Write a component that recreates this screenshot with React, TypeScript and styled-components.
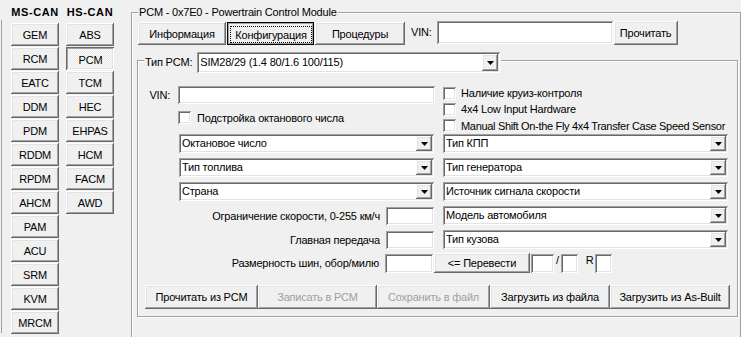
import React from 'react';
import styled, { createGlobalStyle, css } from 'styled-components';

const Global = createGlobalStyle`
  html, body { margin: 0; padding: 0; background: #f0f0f0; }
  body {
    width: 741px; height: 337px; overflow: hidden;
    font-family: "Liberation Sans", Arial, sans-serif;
    font-size: 11px; letter-spacing: -0.2px; color: #000;
  }
  * { box-sizing: border-box; }
`;

const raised = css`
  background: #f0f0f0;
  box-shadow: inset -1px -1px #696969, inset 1px 1px #fff, inset -2px -2px #a0a0a0, inset 2px 2px #e3e3e3;
`;
const sunken = css`
  background: #fff;
  box-shadow: inset 1px 1px #a0a0a0, inset -1px -1px #fff, inset 2px 2px #696969, inset -2px -2px #e3e3e3;
`;

const Page = styled.div`
  display: flex;
  height: 337px;
  overflow: hidden;
`;

/* ---------- side ---------- */
const Side = styled.div`
  width: 131px;
  flex-shrink: 0;
  display: flex;
  align-items: flex-start;
`;
const EdgeLine = styled.div`
  width: 1px;
  height: 313px;
  margin: 20px 9px 0 1px;
  background: #a0a0a0;
`;
const Column = styled.div<{ $gapLeft?: number }>`
  width: 48px;
  display: flex;
  flex-direction: column;
  gap: 1px;
  margin-left: ${p => p.$gapLeft ?? 0}px;
`;
const ColumnHeader = styled.div`
  height: 22px;
  line-height: 24px;
  text-align: center;
  font-weight: bold;
  letter-spacing: 0.6px;
  white-space: nowrap;
`;
const SideButton = styled.button<{ $active?: boolean }>`
  width: 48px;
  height: 23px;
  border: 0;
  padding: 0;
  font: inherit;
  letter-spacing: inherit;
  color: #000;
  ${raised}
  ${p => p.$active && css`
    background: repeating-conic-gradient(#fff 0 25%, #e6e6e6 0 50%) 0 0 / 2px 2px;
    box-shadow: inset 1px 1px #696969, inset -1px -1px #fff, inset 2px 2px #a0a0a0, inset -2px -2px #e3e3e3;
    padding: 2px 0 0 1px;
  `}
`;

/* ---------- group boxes ---------- */
const Group = styled.fieldset`
  margin: 0;
  padding: 0;
  min-width: 0;
  border: 1px solid #a0a0a0;
  box-shadow: inset 1px 1px #fff, 1px 1px #fff;
`;
const OuterGroup = styled(Group)`
  width: 610px;
  height: 400px;
  margin-top: 6px;
  padding: 2px 0 0 6px;
`;
const OuterLegend = styled.legend`
  padding: 0 1px;
  line-height: 13px;
  height: 13px;
  background: #f0f0f0;
  white-space: nowrap;
`;
const InnerGroup = styled(Group)`
  width: 601px;
  margin: 7px 0 0 -1px;
`;
const InnerLegend = styled.legend`
  padding: 0 1px;
  margin-left: 6px;
  height: 16px;
  background: #f0f0f0;
`;
const LegendContent = styled.span`
  display: flex;
  align-items: flex-start;
  gap: 5px;
  line-height: 21px;
`;

/* ---------- controls ---------- */
const Button = styled.button<{ $w: number; $h?: number; $disabled?: boolean }>`
  width: ${p => p.$w}px;
  height: ${p => p.$h ?? 24}px;
  flex-shrink: 0;
  border: 0;
  padding: 0;
  font: inherit;
  letter-spacing: inherit;
  color: ${p => (p.$disabled ? '#a0a0a0' : '#000')};
  white-space: nowrap;
  ${raised}
`;
const TabButton = styled.button<{ $w: number; $active?: boolean }>`
  width: ${p => p.$w}px;
  height: 23px;
  margin-top: 1px;
  flex-shrink: 0;
  border: 0;
  padding: 0;
  font: inherit;
  letter-spacing: inherit;
  color: #000;
  display: flex;
  align-items: stretch;
  justify-content: stretch;
  ${raised}
  ${p => p.$active && css`
    border: 1px solid #000;
    box-shadow: inset 1px 1px #a0a0a0, inset -1px -1px #a0a0a0;
    padding: 3px 1px 1px 2px;
  `}
`;
const TabLabel = styled.span<{ $focus?: boolean }>`
  flex: 1;
  display: flex;
  align-items: center;
  justify-content: center;
  border: 1px dotted ${p => (p.$focus ? '#000' : 'transparent')};
`;
const TextInput = styled.div<{ $w: number; $h?: number; $ml?: number }>`
  width: ${p => p.$w}px;
  height: ${p => p.$h ?? 18}px;
  margin-left: ${p => p.$ml ?? 0}px;
  flex-shrink: 0;
  ${sunken}
`;
const Combo = styled.div<{ $w: number; $h?: number; $ml?: number }>`
  width: ${p => p.$w}px;
  height: ${p => p.$h ?? 19}px;
  margin-left: ${p => p.$ml ?? 0}px;
  flex-shrink: 0;
  display: flex;
  padding: 2px;
  ${sunken}
`;
const ComboText = styled.span<{ $lh?: number }>`
  flex: 1;
  padding-left: 1px;
  line-height: ${p => p.$lh ?? 15}px;
  white-space: nowrap;
  overflow: hidden;
`;
const ComboArrow = styled.span`
  width: 16px;
  display: flex;
  align-items: center;
  justify-content: center;
  ${raised}
`;
const CheckRow = styled.div<{ $h?: number; $tight?: boolean }>`
  display: flex;
  align-items: center;
  gap: 5px;
  height: ${p => p.$h ?? 13}px;
  white-space: nowrap;
  letter-spacing: ${p => (p.$tight ? '-0.32px' : 'inherit')};
`;
const CheckBox = styled.span`
  width: 13px;
  height: 13px;
  flex-shrink: 0;
  ${sunken}
`;

/* ---------- layout pieces ---------- */
const TopRow = styled.div`
  display: flex;
  align-items: flex-start;
  height: 24px;
  gap: 1px;
`;
const TopVinLabel = styled.span`
  line-height: 23px;
  margin: 0 4px 0 5px;
`;
const InnerBody = styled.div`
  padding: 18px 0 7px 0;
`;
const TopSection = styled.div`
  display: flex;
  height: 48px;
`;
const LeftTop = styled.div`
  width: 297px;
  display: flex;
  flex-direction: column;
`;
const VinRow = styled.div`
  display: flex;
  align-items: center;
  height: 18px;
`;
const SideLabel = styled.span`
  width: 40px;
  padding-right: 8px;
  text-align: right;
  flex-shrink: 0;
`;
const LeftCheck = styled(CheckRow)`
  margin: 7px 0 0 40px;
  gap: 6px;
`;
const RightTop = styled.div`
  width: 290px;
  margin: -1px 0 0 8px;
  display: flex;
  flex-direction: column;
`;
const SelectGrid = styled.div`
  display: grid;
  grid-template-columns: 257px 285px;
  grid-template-rows: repeat(5, 19px);
  grid-auto-flow: column;
  column-gap: 8px;
  row-gap: 5px;
  margin-left: 40px;
`;
const FieldRow = styled.div<{ $w?: number }>`
  display: flex;
  align-items: center;
  justify-content: flex-end;
  gap: 6px;
  width: ${p => (p.$w ? `${p.$w}px` : 'auto')};
  flex-shrink: 0;
  white-space: nowrap;
  padding-right: 1px;
`;
const ConvertRow = styled.div`
  display: flex;
  align-items: center;
  height: 20px;
  margin: 4px 0 0 40px;
`;
const Slash = styled.span<{ $ml: number; $mr: number }>`
  margin: 0 ${p => p.$mr}px 0 ${p => p.$ml}px;
  align-self: flex-start;
  line-height: 15px;
`;
const ButtonRow = styled.div`
  display: flex;
  margin: 12px 0 0 7px;
`;

const Arrow = () => (
  <svg width="7" height="4" viewBox="0 0 7 4">
    <path d="M0 0h7L3.5 4z" fill="#000" />
  </svg>
);

const Select = ({ text, w, h, ml, lh }: { text: string; w: number; h?: number; ml?: number; lh?: number }) => (
  <Combo $w={w} $h={h} $ml={ml} role="combobox">
    <ComboText $lh={lh}>{text}</ComboText>
    <ComboArrow>
      <Arrow />
    </ComboArrow>
  </Combo>
);

const ms = ['GEM', 'RCM', 'EATC', 'DDM', 'PDM', 'RDDM', 'RPDM', 'AHCM', 'PAM', 'ACU', 'SRM', 'KVM', 'MRCM'];
const hs = ['ABS', 'PCM', 'TCM', 'HEC', 'EHPAS', 'HCM', 'FACM', 'AWD'];

export default function App() {
  return (
    <>
      <Global />
      <Page>
        <Side>
          <EdgeLine />
          <Column>
            <ColumnHeader>MS-CAN</ColumnHeader>
            {ms.map(m => (
              <SideButton key={m}>{m}</SideButton>
            ))}
          </Column>
          <Column $gapLeft={7}>
            <ColumnHeader>HS-CAN</ColumnHeader>
            {hs.map(m => (
              <SideButton key={m} $active={m === 'PCM'}>
                {m}
              </SideButton>
            ))}
          </Column>
        </Side>

        <OuterGroup>
          <OuterLegend>PCM - 0x7E0 - Powertrain Control Module</OuterLegend>
          <TopRow>
            <TabButton $w={88}>
              <TabLabel>Информация</TabLabel>
            </TabButton>
            <TabButton $w={87} $active>
              <TabLabel $focus>Конфигурация</TabLabel>
            </TabButton>
            <TabButton $w={90}>
              <TabLabel>Процедуры</TabLabel>
            </TabButton>
            <TopVinLabel>VIN:</TopVinLabel>
            <TextInput $w={176} $h={23} />
            <Button $w={64}>Прочитать</Button>
          </TopRow>

          <InnerGroup>
            <InnerLegend>
              <LegendContent>
                <span>Тип PCM:</span>
                <Select text="SIM28/29 (1.4 80/1.6 100/115)" w={303} h={21} lh={17} />
              </LegendContent>
            </InnerLegend>
            <InnerBody>
              <TopSection>
                <LeftTop>
                  <VinRow>
                    <SideLabel>VIN:</SideLabel>
                    <TextInput $w={257} />
                  </VinRow>
                  <LeftCheck>
                    <CheckBox />
                    <span>Подстройка октанового числа</span>
                  </LeftCheck>
                </LeftTop>
                <RightTop>
                  <CheckRow $h={16.5}>
                    <CheckBox />
                    <span>Наличие круиз-контроля</span>
                  </CheckRow>
                  <CheckRow $h={16.5}>
                    <CheckBox />
                    <span>4x4 Low Input Hardware</span>
                  </CheckRow>
                  <CheckRow $h={16.5} $tight>
                    <CheckBox />
                    <span>Manual Shift On-the Fly 4x4 Transfer Case Speed Sensor</span>
                  </CheckRow>
                </RightTop>
              </TopSection>

              <SelectGrid>
                <Select text="Октановое число" w={255} ml={1} />
                <Select text="Тип топлива" w={255} ml={1} />
                <Select text="Страна" w={255} ml={1} />
                <FieldRow>
                  <span>Ограничение скорости, 0-255 км/ч</span>
                  <TextInput $w={48} />
                </FieldRow>
                <FieldRow>
                  <span>Главная передача</span>
                  <TextInput $w={48} />
                </FieldRow>
                <Select text="Тип КПП" w={285} />
                <Select text="Тип генератора" w={285} />
                <Select text="Источник сигнала скорости" w={285} />
                <Select text="Модель автомобиля" w={285} />
                <Select text="Тип кузова" w={285} />
              </SelectGrid>

              <ConvertRow>
                <FieldRow $w={256}>
                  <span>Размерность шин, обор/милю</span>
                  <TextInput $w={48} $h={19} />
                </FieldRow>
                <Button $w={96} $h={20}>
                  &lt;= Перевести
                </Button>
                <TextInput $w={23} $h={19} $ml={1} />
                <Slash $ml={2} $mr={2}>/</Slash>
                <TextInput $w={17} $h={19} />
                <Slash $ml={8} $mr={1}>R</Slash>
                <TextInput $w={17} $h={19} />
              </ConvertRow>

              <ButtonRow>
                <Button $w={113}>Прочитать из PCM</Button>
                <Button $w={119} $disabled>
                  Записать в PCM
                </Button>
                <Button $w={113} $disabled>
                  Сохранить в файл
                </Button>
                <Button $w={120}>Загрузить из файла</Button>
                <Button $w={120}>Загрузить из As-Built</Button>
              </ButtonRow>
            </InnerBody>
          </InnerGroup>
        </OuterGroup>
      </Page>
    </>
  );
}
